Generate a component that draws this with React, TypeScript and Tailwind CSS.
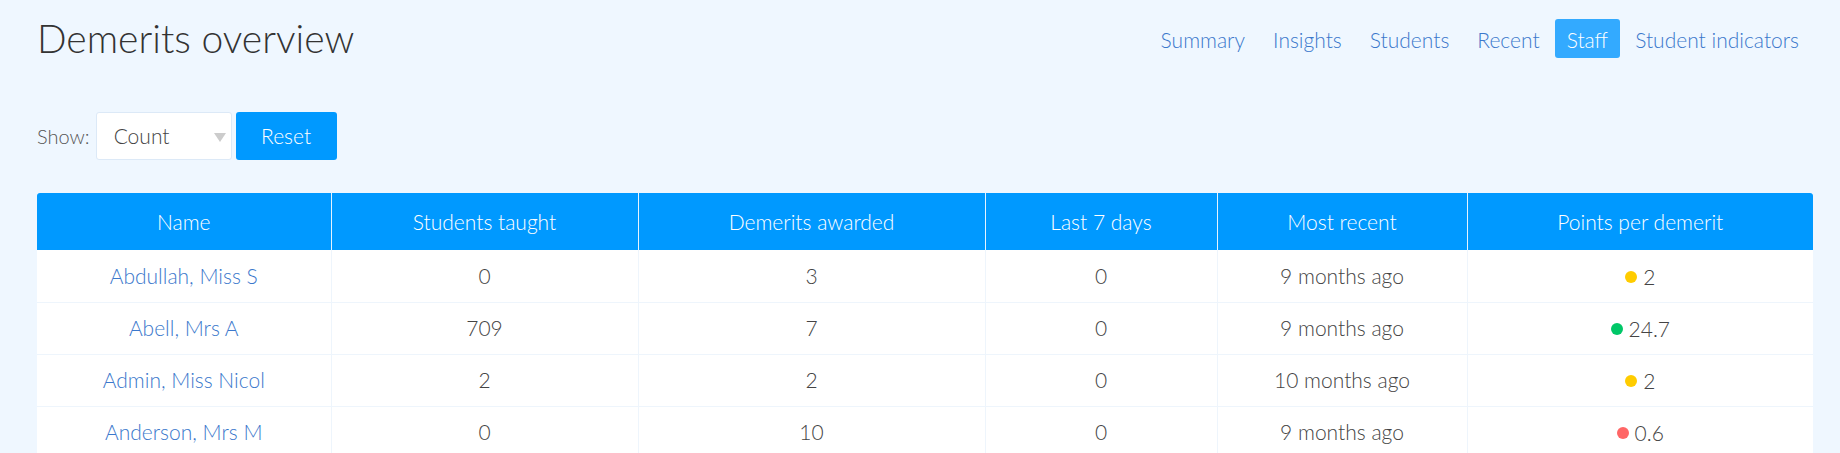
import React from 'react';

const navItems = ['Summary', 'Insights', 'Students', 'Recent', 'Staff', 'Student indicators'];

type Row = {
  name: string;
  taught: number;
  awarded: number;
  last7: number;
  recent: string;
  points: string;
  level: 'ok' | 'good' | 'bad';
};

const rows: Row[] = [
  { name: 'Abdullah, Miss S', taught: 0, awarded: 3, last7: 0, recent: '9 months ago', points: '2', level: 'ok' },
  { name: 'Abell, Mrs A', taught: 709, awarded: 7, last7: 0, recent: '9 months ago', points: '24.7', level: 'good' },
  { name: 'Admin, Miss Nicol', taught: 2, awarded: 2, last7: 0, recent: '10 months ago', points: '2', level: 'ok' },
  { name: 'Anderson, Mrs M', taught: 0, awarded: 10, last7: 0, recent: '9 months ago', points: '0.6', level: 'bad' },
];

const dotColour = {
  ok: 'bg-[#ffcc00]',
  good: 'bg-[#00c767]',
  bad: 'bg-[#ff6666]',
};

const headers = ['Name', 'Students taught', 'Demerits awarded', 'Last 7 days', 'Most recent', 'Points per demerit'];

export default function App() {
  return (
    <div
      className="min-h-[453px] bg-[#eff7ff] pl-[37px] pr-[27px] pt-[19px] text-[#444]"
      style={{ fontFamily: 'Lato, "Open Sans", sans-serif' }}
    >
      {/* header */}
      <div className="flex items-center justify-between h-[39px]">
        <h1 className="text-[39px] font-light leading-[48px] text-[#333] -mt-[2px]">Demerits overview</h1>
        <nav className="flex items-center">
          {navItems.map((item) =>
            item === 'Staff' ? (
              <span
                key={item}
                className="h-[39px] mx-[1px] px-[12px] pt-[2px] flex items-center rounded-[3px] bg-[#33aaff] text-white text-[21px] font-light"
              >
                {item}
              </span>
            ) : (
              <a
                key={item}
                href="#"
                className="h-[39px] px-[14px] pt-[2px] flex items-center text-[#3b78cc] text-[21px] font-light"
              >
                {item}
              </a>
            )
          )}
        </nav>
      </div>

      {/* filter */}
      <div className="flex items-center mt-[54px] h-[48px]">
        <span className="text-[20px] font-light text-[#555] mr-[6px]">Show:</span>
        <div className="relative w-[136px] h-[48px] bg-white border border-[#dce9f7] rounded-[3px] flex items-center pl-[17px] text-[21px] font-light text-[#444]">
          Count
          <span className="absolute right-[5px] top-[20px] w-0 h-0 border-l-[6px] border-r-[6px] border-t-[9px] border-l-transparent border-r-transparent border-t-[#cccccc]" />
        </div>
        <button className="ml-[4px] w-[101px] h-[48px] rounded-[3px] bg-[#0099ff] text-white text-[21px] font-light">
          Reset
        </button>
      </div>

      {/* table */}
      <table className="mt-[33px] w-full table-fixed border-collapse bg-white">
        <colgroup>
          <col className="w-[294px]" />
          <col className="w-[307px]" />
          <col className="w-[347px]" />
          <col className="w-[232px]" />
          <col className="w-[250px]" />
          <col />
        </colgroup>
        <thead>
          <tr className="bg-[#0099ff] h-[57px]">
            {headers.map((h, i) => (
              <th
                key={h}
                className={`font-light text-white text-[21px] text-center ${i > 0 ? 'border-l border-[#e6f3ff]' : ''} ${
                  i === 0 ? 'rounded-tl-[3px]' : ''
                } ${i === headers.length - 1 ? 'rounded-tr-[3px]' : ''}`}
              >
                {h}
              </th>
            ))}
          </tr>
        </thead>
        <tbody>
          {rows.map((r) => (
            <tr key={r.name} className="h-[52px] border-b border-[#eef5fc] text-[21px] font-light">
              <td className="text-center">
                <a href="#" className="text-[#3b78cc]">
                  {r.name}
                </a>
              </td>
              <td className="text-center border-l border-[#eef5fc]">{r.taught}</td>
              <td className="text-center border-l border-[#eef5fc]">{r.awarded}</td>
              <td className="text-center border-l border-[#eef5fc]">{r.last7}</td>
              <td className="text-center border-l border-[#eef5fc]">{r.recent}</td>
              <td className="text-center border-l border-[#eef5fc]">
                <span className="inline-flex items-center gap-[6px]">
                  <span className={`w-[12px] h-[12px] rounded-full ${dotColour[r.level]}`} />
                  {r.points}
                </span>
              </td>
            </tr>
          ))}
        </tbody>
      </table>
    </div>
  );
}
